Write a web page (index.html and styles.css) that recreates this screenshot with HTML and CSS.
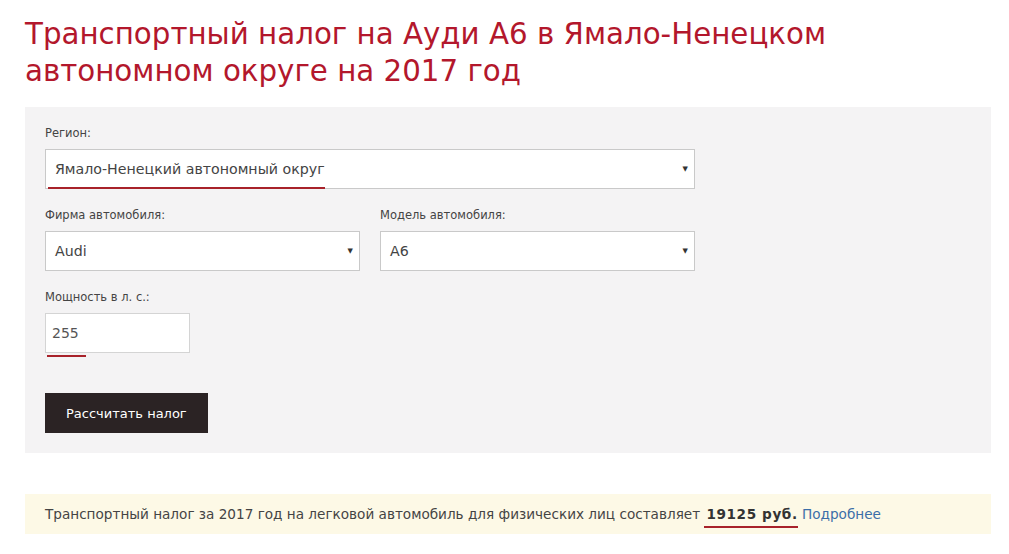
FILE: index.html
```html
<!DOCTYPE html>
<html lang="ru">
<head>
<meta charset="utf-8">
<title>Транспортный налог</title>
<link rel="stylesheet" href="styles.css">
</head>
<body>
<div class="page">
  <h1 class="title">Транспортный налог на Ауди А6 в Ямало-Ненецком автономном округе на 2017 год</h1>
  <form class="calc">
    <div class="group wide">
      <label class="lbl">Регион:</label>
      <div class="sel">
        <span class="val marked mark-region">Ямало-Ненецкий автономный округ</span>
        <span class="arrow">▼</span>
      </div>
    </div>
    <div class="row">
      <div class="group">
        <label class="lbl">Фирма автомобиля:</label>
        <div class="sel">
          <span class="val">Audi</span>
          <span class="arrow">▼</span>
        </div>
      </div>
      <div class="group">
        <label class="lbl">Модель автомобиля:</label>
        <div class="sel">
          <span class="val">A6</span>
          <span class="arrow">▼</span>
        </div>
      </div>
    </div>
    <div class="group">
      <label class="lbl">Мощность в л. с.:</label>
      <div class="inp marked-box"><span class="num">255</span></div>
    </div>
    <button type="button" class="btn">Рассчитать налог</button>
  </form>
  <div class="result">
    Транспортный налог за 2017 год на легковой автомобиль для физических лиц составляет <b class="sum">19125 руб.</b> <a class="more" href="#">Подробнее</a>
  </div>
</div>
</body>
</html>
```
FILE: styles.css
```css
html, body {
  margin: 0;
  padding: 0;
  background: #fff;
}
body {
  font-family: "DejaVu Sans", Verdana, sans-serif;
  color: #444;
}
.page {
  padding: 16px 18px 0 25px;
}
.title {
  margin: 0 0 17px;
  font-weight: normal;
  font-size: 29.3px;
  line-height: 37px;
  color: #b3172c;
  max-width: 850px;
}
.calc {
  background: #f4f3f4;
  padding: 18px 20px 20px;
  display: flex;
  flex-direction: column;
}
.group {
  display: flex;
  flex-direction: column;
  width: 315px;
  margin-bottom: 18px;
}
.group.wide {
  width: 650px;
}
.row {
  display: flex;
  gap: 20px;
}
.lbl {
  font-size: 11.5px;
  line-height: 16px;
  margin-bottom: 8px;
  color: #444;
}
.sel {
  position: relative;
  height: 40px;
  box-sizing: border-box;
  border: 1px solid #c9c9c9;
  background: #fff;
  display: flex;
  align-items: center;
  justify-content: space-between;
  padding: 0 6px 0 9px;
  font-size: 14.2px;
  color: #444;
}
.arrow {
  font-size: 7px;
  color: #333;
}
.marked {
  position: relative;
}
.mark-region::after {
  content: "";
  position: absolute;
  left: -7px;
  right: 0;
  top: 26px;
  height: 2px;
  background: #a8222a;
}
.inp {
  position: relative;
  width: 145px;
  height: 40px;
  box-sizing: border-box;
  border: 1px solid #d4d4d4;
  background: #fff;
  display: flex;
  align-items: center;
  padding-left: 6px;
  font-size: 14px;
  color: #555;
}
.marked-box::after {
  content: "";
  position: absolute;
  left: 1px;
  top: 41px;
  width: 39px;
  height: 2px;
  background: #a8222a;
}
.btn {
  align-self: flex-start;
  margin-top: 22px;
  height: 40px;
  padding: 0 21px;
  border: 0;
  background: #2b2324;
  color: #fff;
  font-family: "DejaVu Sans", Verdana, sans-serif;
  font-size: 13px;
}
.result {
  margin-top: 41px;
  background: #fdf9e6;
  height: 40px;
  line-height: 40px;
  padding-left: 20px;
  font-size: 13.6px;
  color: #444;
}
.sum {
  position: relative;
  color: #333;
  display: inline-block;
  line-height: 20px;
  letter-spacing: 0.6px;
  margin-left: 2px;
}
.sum::after {
  content: "";
  position: absolute;
  left: -2px;
  right: 0;
  bottom: -4px;
  height: 2px;
  background: #a8222a;
}
.more {
  color: #3b6ea8;
  text-decoration: none;
}
```
